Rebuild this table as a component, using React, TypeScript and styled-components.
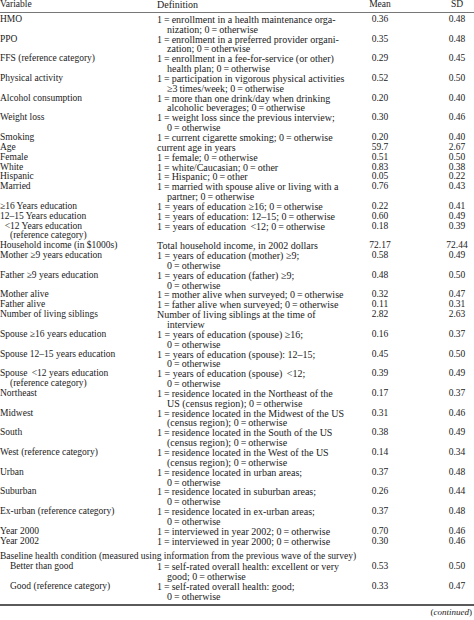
import React from 'react';
import styled, { createGlobalStyle } from 'styled-components';

const GlobalStyle = createGlobalStyle`
  html, body {
    margin: 0;
    padding: 0;
    background: #ffffff;
  }
  body {
    font-family: "Liberation Serif", "Times New Roman", serif;
    color: #222222;
  }
`;

const Page = styled.div`
  width: 474px;
  font-size: 9.5px;
  line-height: 9.85px;
`;

const Grid = styled.div`
  display: grid;
  grid-template-columns: 157px 183px 80px 1fr;
`;

const HeadRow = styled(Grid)`
  padding-bottom: 2px;
  border-bottom: 1px solid #777777;
  margin-bottom: 1px;
`;

const Body = styled.div`
  padding-top: 1px;
`;

const Cell = styled.div<{ $num?: boolean; $sd?: boolean; $def?: boolean }>`
  white-space: nowrap;
  font-size: ${({ $def }) => ($def ? '10px' : '9.5px')};
  text-align: ${({ $num }) => ($num ? 'center' : 'left')};
  padding-left: ${({ $sd }) => ($sd ? '20px' : '0')};
`;

const Line = styled.div<{ $indent?: boolean }>`
  padding-left: ${({ $indent }) => ($indent ? '10px' : '0')};
`;

const SectionRow = styled.div`
  padding-top: 6px;
  white-space: nowrap;
`;

const SubRow = styled(Grid)`
  & > div:first-child {
    padding-left: 10px;
  }
`;

const BottomRule = styled.div`
  margin-top: 2px;
  border-top: 2px solid #5a5a5a;
`;

const Continued = styled.div`
  text-align: right;
  padding: 2px 2px 0 0;
  font-size: 9px;
`;

type Row = {
  variable: string[];
  def: string[];
  mean: string;
  sd: string;
};

const rows: Row[] = [
  { variable: ['HMO'], def: ['1\u2009=\u2009enrollment in a health maintenance orga-', 'nization; 0\u2009=\u2009otherwise'], mean: '0.36', sd: '0.48' },
  { variable: ['PPO'], def: ['1\u2009=\u2009enrollment in a preferred provider organi-', 'zation; 0\u2009=\u2009otherwise'], mean: '0.35', sd: '0.48' },
  { variable: ['FFS (reference category)'], def: ['1\u2009=\u2009enrollment in a fee-for-service (or other)', 'health plan; 0\u2009=\u2009otherwise'], mean: '0.29', sd: '0.45' },
  { variable: ['Physical activity'], def: ['1\u2009=\u2009participation in vigorous physical activities', '\u22653\u2009times/week; 0\u2009=\u2009otherwise'], mean: '0.52', sd: '0.50' },
  { variable: ['Alcohol consumption'], def: ['1\u2009=\u2009more than one drink/day when drinking', 'alcoholic beverages; 0\u2009=\u2009otherwise'], mean: '0.20', sd: '0.40' },
  { variable: ['Weight loss'], def: ['1\u2009=\u2009weight loss since the previous interview;', '0\u2009=\u2009otherwise'], mean: '0.30', sd: '0.46' },
  { variable: ['Smoking'], def: ['1\u2009=\u2009current cigarette smoking; 0\u2009=\u2009otherwise'], mean: '0.20', sd: '0.40' },
  { variable: ['Age'], def: ['current age in years'], mean: '59.7', sd: '2.67' },
  { variable: ['Female'], def: ['1\u2009=\u2009female; 0\u2009=\u2009otherwise'], mean: '0.51', sd: '0.50' },
  { variable: ['White'], def: ['1\u2009=\u2009white/Caucasian; 0\u2009=\u2009other'], mean: '0.83', sd: '0.38' },
  { variable: ['Hispanic'], def: ['1\u2009=\u2009Hispanic; 0\u2009=\u2009other'], mean: '0.05', sd: '0.22' },
  { variable: ['Married'], def: ['1\u2009=\u2009married with spouse alive or living with a', 'partner; 0\u2009=\u2009otherwise'], mean: '0.76', sd: '0.43' },
  { variable: ['\u226516\u2009Years education'], def: ['1 = years of education \u226516; 0\u2009=\u2009otherwise'], mean: '0.22', sd: '0.41' },
  { variable: ['12\u201315\u2009Years education'], def: ['1 = years of education: 12\u201315; 0\u2009=\u2009otherwise'], mean: '0.60', sd: '0.49' },
  { variable: ['\u2002<12\u2009Years education', '(reference category)'], def: ['1 = years of education \u2009<12; 0\u2009=\u2009otherwise'], mean: '0.18', sd: '0.39' },
  { variable: ['Household income (in $1000s)'], def: ['Total household income, in 2002 dollars'], mean: '72.17', sd: '72.44' },
  { variable: ['Mother \u22659 years education'], def: ['1 = years of education (mother) \u22659;', '0\u2009=\u2009otherwise'], mean: '0.58', sd: '0.49' },
  { variable: ['Father \u22659 years education'], def: ['1 = years of education (father) \u22659;', '0\u2009=\u2009otherwise'], mean: '0.48', sd: '0.50' },
  { variable: ['Mother alive'], def: ['1\u2009=\u2009mother alive when surveyed; 0\u2009=\u2009otherwise'], mean: '0.32', sd: '0.47' },
  { variable: ['Father alive'], def: ['1\u2009=\u2009father alive when surveyed; 0\u2009=\u2009otherwise'], mean: '0.11', sd: '0.31' },
  { variable: ['Number of living siblings'], def: ['Number of living siblings at the time of', 'interview'], mean: '2.82', sd: '2.63' },
  { variable: ['Spouse \u226516 years education'], def: ['1 = years of education (spouse) \u226516;', '0\u2009=\u2009otherwise'], mean: '0.16', sd: '0.37' },
  { variable: ['Spouse 12\u201315 years education'], def: ['1 = years of education (spouse): 12\u201315;', '0\u2009=\u2009otherwise'], mean: '0.45', sd: '0.50' },
  { variable: ['Spouse \u2009<12 years education', '(reference category)'], def: ['1 = years of education (spouse) \u2009<12;', '0\u2009=\u2009otherwise'], mean: '0.39', sd: '0.49' },
  { variable: ['Northeast'], def: ['1\u2009=\u2009residence located in the Northeast of the', 'US (census region); 0\u2009=\u2009otherwise'], mean: '0.17', sd: '0.37' },
  { variable: ['Midwest'], def: ['1\u2009=\u2009residence located in the Midwest of the US', '(census region); 0\u2009=\u2009otherwise'], mean: '0.31', sd: '0.46' },
  { variable: ['South'], def: ['1\u2009=\u2009residence located in the South of the US', '(census region); 0\u2009=\u2009otherwise'], mean: '0.38', sd: '0.49' },
  { variable: ['West (reference category)'], def: ['1\u2009=\u2009residence located in the West of the US', '(census region); 0\u2009=\u2009otherwise'], mean: '0.14', sd: '0.34' },
  { variable: ['Urban'], def: ['1\u2009=\u2009residence located in urban areas;', '0\u2009=\u2009otherwise'], mean: '0.37', sd: '0.48' },
  { variable: ['Suburban'], def: ['1\u2009=\u2009residence located in suburban areas;', '0\u2009=\u2009otherwise'], mean: '0.26', sd: '0.44' },
  { variable: ['Ex-urban (reference category)'], def: ['1\u2009=\u2009residence located in ex-urban areas;', '0\u2009=\u2009otherwise'], mean: '0.37', sd: '0.48' },
  { variable: ['Year 2000'], def: ['1\u2009=\u2009interviewed in year 2002; 0\u2009=\u2009otherwise'], mean: '0.70', sd: '0.46' },
  { variable: ['Year 2002'], def: ['1\u2009=\u2009interviewed in year 2000; 0\u2009=\u2009otherwise'], mean: '0.30', sd: '0.46' },
];

const healthRows: Row[] = [
  { variable: ['Better than good'], def: ['1\u2009=\u2009self-rated overall health: excellent or very', 'good; 0\u2009=\u2009otherwise'], mean: '0.53', sd: '0.50' },
  { variable: ['Good (reference category)'], def: ['1\u2009=\u2009self-rated overall health: good;', '0\u2009=\u2009otherwise'], mean: '0.33', sd: '0.47' },
];

function Lines({ items }: { items: string[] }) {
  return (
    <>
      {items.map((t, i) => (
        <Line key={i} $indent={i > 0}>
          {t}
        </Line>
      ))}
    </>
  );
}

function RowCells({ row }: { row: Row }) {
  return (
    <>
      <Cell>
        <Lines items={row.variable} />
      </Cell>
      <Cell $def>
        <Lines items={row.def} />
      </Cell>
      <Cell $num>{row.mean}</Cell>
      <Cell $num $sd>
        {row.sd}
      </Cell>
    </>
  );
}

export default function App() {
  return (
    <Page>
      <GlobalStyle />
      <HeadRow>
        <Cell>Variable</Cell>
        <Cell $def>Definition</Cell>
        <Cell $num>Mean</Cell>
        <Cell $num $sd>
          SD
        </Cell>
      </HeadRow>
      <Body>
        {rows.map((r, i) => (
          <Grid key={i}>
            <RowCells row={r} />
          </Grid>
        ))}
        <SectionRow>
          Baseline health condition (measured using information from the previous wave of the survey)
        </SectionRow>
        {healthRows.map((r, i) => (
          <SubRow key={i}>
            <RowCells row={r} />
          </SubRow>
        ))}
      </Body>
      <BottomRule />
      <Continued>
        (<i>continued</i>)
      </Continued>
    </Page>
  );
}
